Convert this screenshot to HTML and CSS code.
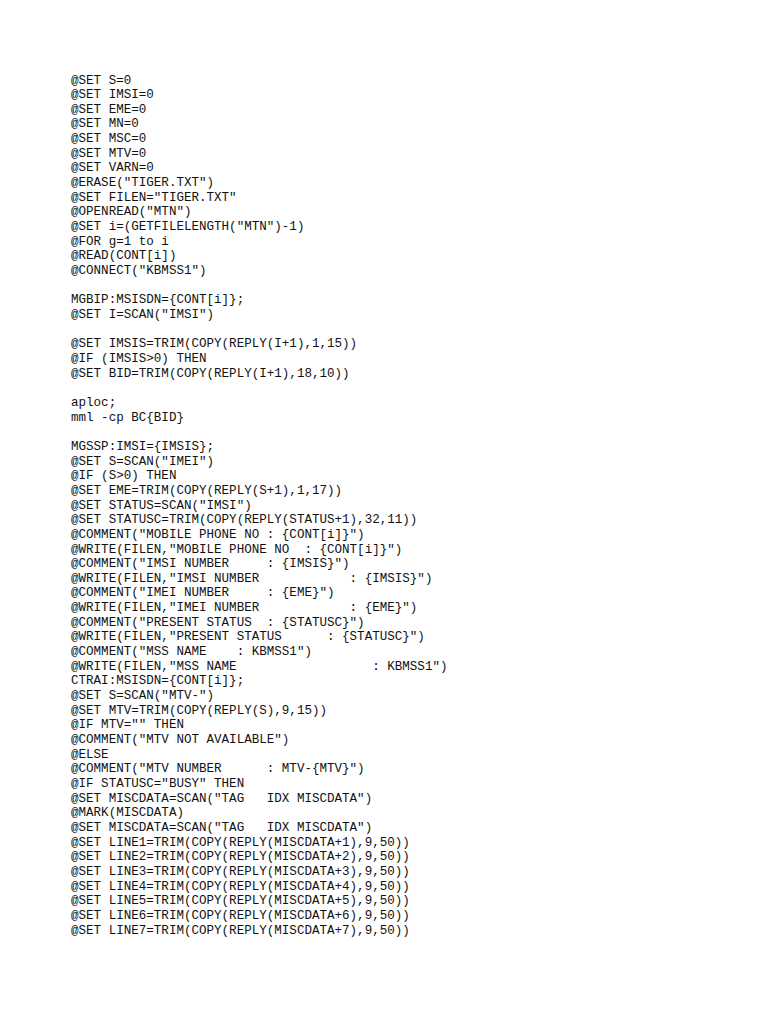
FILE: index.html
```html
<!DOCTYPE html>
<html>
<head>
<meta charset="utf-8">
<title>Script</title>
<link rel="stylesheet" href="styles.css">
</head>
<body>
<main class="page">
<pre class="code">@SET S=0
@SET IMSI=0
@SET EME=0
@SET MN=0
@SET MSC=0
@SET MTV=0
@SET VARN=0
@ERASE("TIGER.TXT")
@SET FILEN="TIGER.TXT"
@OPENREAD("MTN")
@SET i=(GETFILELENGTH("MTN")-1)
@FOR g=1 to i
@READ(CONT[i])
@CONNECT("KBMSS1")

MGBIP:MSISDN={CONT[i]};
@SET I=SCAN("IMSI")

@SET IMSIS=TRIM(COPY(REPLY(I+1),1,15))
@IF (IMSIS&gt;0) THEN
@SET BID=TRIM(COPY(REPLY(I+1),18,10))

aploc;
mml -cp BC{BID}

MGSSP:IMSI={IMSIS};
@SET S=SCAN("IMEI")
@IF (S&gt;0) THEN
@SET EME=TRIM(COPY(REPLY(S+1),1,17))
@SET STATUS=SCAN("IMSI")
@SET STATUSC=TRIM(COPY(REPLY(STATUS+1),32,11))
@COMMENT("MOBILE PHONE NO : {CONT[i]}")
@WRITE(FILEN,"MOBILE PHONE NO  : {CONT[i]}")
@COMMENT("IMSI NUMBER     : {IMSIS}")
@WRITE(FILEN,"IMSI NUMBER            : {IMSIS}")
@COMMENT("IMEI NUMBER     : {EME}")
@WRITE(FILEN,"IMEI NUMBER            : {EME}")
@COMMENT("PRESENT STATUS  : {STATUSC}")
@WRITE(FILEN,"PRESENT STATUS      : {STATUSC}")
@COMMENT("MSS NAME    : KBMSS1")
@WRITE(FILEN,"MSS NAME                  : KBMSS1")
CTRAI:MSISDN={CONT[i]};
@SET S=SCAN("MTV-")
@SET MTV=TRIM(COPY(REPLY(S),9,15))
@IF MTV="" THEN
@COMMENT("MTV NOT AVAILABLE")
@ELSE
@COMMENT("MTV NUMBER      : MTV-{MTV}")
@IF STATUSC="BUSY" THEN
@SET MISCDATA=SCAN("TAG   IDX MISCDATA")
@MARK(MISCDATA)
@SET MISCDATA=SCAN("TAG   IDX MISCDATA")
@SET LINE1=TRIM(COPY(REPLY(MISCDATA+1),9,50))
@SET LINE2=TRIM(COPY(REPLY(MISCDATA+2),9,50))
@SET LINE3=TRIM(COPY(REPLY(MISCDATA+3),9,50))
@SET LINE4=TRIM(COPY(REPLY(MISCDATA+4),9,50))
@SET LINE5=TRIM(COPY(REPLY(MISCDATA+5),9,50))
@SET LINE6=TRIM(COPY(REPLY(MISCDATA+6),9,50))
@SET LINE7=TRIM(COPY(REPLY(MISCDATA+7),9,50))</pre>
</main>
</body>
</html>
```

FILE: styles.css
```css
html, body {
  margin: 0;
  padding: 0;
  background: #ffffff;
}

.page {
  width: 768px;
  height: 1024px;
  box-sizing: border-box;
  padding: 73.5px 0 0 71px;
}

.code {
  margin: 0;
  font-family: "Liberation Mono", "DejaVu Sans Mono", monospace;
  font-size: 12.55px;
  line-height: 14.65px;
  color: #111111;
  white-space: pre;
}
```
